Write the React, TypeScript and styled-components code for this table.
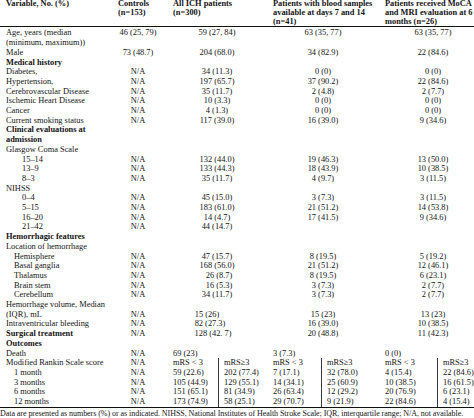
import React from 'react';
import styled, { createGlobalStyle } from 'styled-components';

const Global = createGlobalStyle`
  html, body { margin: 0; padding: 0; background: #ffffff; overflow: hidden; }
`;

const Page = styled.div`
  width: 474px;
  height: 418px;
  overflow: hidden;
  background: #ffffff;
  font-family: "Liberation Serif", "Times New Roman", serif;
  font-size: 8.4px;
  color: #141414;
`;

const Sheet = styled.div`
  width: 493px;
  margin-top: -1.5px;
`;

const Grid = styled.div`
  display: grid;
  grid-template-columns: 118px 55px 45px 55px 48px 64px 52px 56px;
  line-height: 9.7px;
`;

const Head = styled.div<{ $span?: number; $first?: boolean }>`
  grid-column: span ${(p) => p.$span ?? 1};
  font-weight: bold;
  line-height: 9.3px;
  white-space: nowrap;
  padding-left: ${(p) => (p.$first ? 6 : 0)}px;
`;

const Rule = styled.div<{ $thick?: boolean; $gap?: number }>`
  grid-column: 1 / -1;
  height: ${(p) => (p.$thick ? 1.5 : 1)}px;
  background: #111111;
  margin-bottom: ${(p) => p.$gap ?? 0}px;
`;

const Label = styled.div<{ $indent?: number; $bold?: boolean; $full?: boolean }>`
  grid-column: ${(p) => (p.$full ? '1 / -1' : 'span 1')};
  padding-left: ${(p) => p.$indent ?? 6}px;
  font-weight: ${(p) => (p.$bold ? 'bold' : 'normal')};
  white-space: nowrap;
`;

const Value = styled.div<{ $span?: number; $pr?: number; $align?: 'start' | 'end' }>`
  grid-column: span ${(p) => p.$span ?? 2};
  text-align: center;
  padding-right: ${(p) => p.$pr ?? 12}px;
  align-self: ${(p) => p.$align ?? 'start'};
  white-space: nowrap;
`;

const Sub = styled.div<{ $span?: number; $divider?: boolean }>`
  grid-column: span ${(p) => p.$span ?? 1};
  white-space: nowrap;
  padding-left: ${(p) => (p.$divider ? 5 : 0)}px;
  border-left: ${(p) => (p.$divider ? '1px solid #3a3a3a' : 'none')};
`;

const Footer = styled.div`
  width: 474px;
  font-size: 8px;
  line-height: 9px;
  white-space: nowrap;
  letter-spacing: -0.05px;
  padding-top: 0.5px;
`;

type DataRow = {
  label: React.ReactNode;
  indent?: number;
  values: [string, string, string, string];
  align?: 'start' | 'end';
  ichPr?: number;
};

type Row = DataRow | { section: React.ReactNode } | { plain: string; indent?: number };

const rows: Row[] = [
  {
    label: (
      <>
        Age, years (median
        <br />
        (minimum, maximum))
      </>
    ),
    values: ['46 (25, 79)', '59 (27, 84)', '63 (35, 77)', '63 (35, 77)'],
  },
  { label: 'Male', values: ['73 (48.7)', '204 (68.0)', '34 (82.9)', '22 (84.6)'] },
  { section: 'Medical history' },
  { label: 'Diabetes,', values: ['N/A', '34 (11.3)', '0 (0)', '0 (0)'] },
  { label: 'Hypertension,', values: ['N/A', '197 (65.7)', '37 (90.2)', '22 (84.6)'] },
  { label: 'Cerebrovascular Disease', values: ['N/A', '35 (11.7)', '2 (4.8)', '2 (7.7)'] },
  { label: 'Ischemic Heart Disease', values: ['N/A', '10 (3.3)', '0 (0)', '0 (0)'] },
  { label: 'Cancer', values: ['N/A', '4 (1.3)', '0 (0)', '0 (0)'] },
  { label: 'Current smoking status', values: ['N/A', '117 (39.0)', '16 (39.0)', '9 (34.6)'] },
  {
    section: (
      <>
        Clinical evaluations at
        <br />
        admission
      </>
    ),
  },
  { plain: 'Glasgow Coma Scale' },
  { label: '15–14', indent: 22, values: ['N/A', '132 (44.0)', '19 (46.3)', '13 (50.0)'] },
  { label: '13–9', indent: 22, values: ['N/A', '133 (44.3)', '18 (43.9)', '10 (38.5)'] },
  { label: '8–3', indent: 22, values: ['N/A', '35 (11.7)', '4 (9.7)', '3 (11.5)'] },
  { plain: 'NIHSS' },
  { label: '0–4', indent: 22, values: ['N/A', '45 (15.0)', '3 (7.3)', '3 (11.5)'] },
  { label: '5–15', indent: 22, values: ['N/A', '183 (61.0)', '21 (51.2)', '14 (53.8)'] },
  { label: '16–20', indent: 22, values: ['N/A', '14 (4.7)', '17 (41.5)', '9 (34.6)'] },
  { label: '21–42', indent: 22, values: ['N/A', '44 (14.7)', '', ''] },
  { section: 'Hemorrhagic features' },
  { plain: 'Location of hemorrhage' },
  { label: 'Hemisphere', indent: 14, values: ['N/A', '47 (15.7)', '8 (19.5)', '5 (19.2)'] },
  { label: 'Basal ganglia', indent: 14, values: ['N/A', '168 (56.0)', '21 (51.2)', '12 (46.1)'] },
  { label: 'Thalamus', indent: 14, values: ['N/A', '26 (8.7)', '8 (19.5)', '6 (23.1)'], ichPr: 8 },
  { label: 'Brain stem', indent: 14, values: ['N/A', '16 (5.3)', '3 (7.3)', '2 (7.7)'], ichPr: 8 },
  { label: 'Cerebellum', indent: 14, values: ['N/A', '34 (11.7)', '3 (7.3)', '2 (7.7)'] },
  {
    label: (
      <>
        Hemorrhage volume, Median
        <br />
        (IQR), mL
      </>
    ),
    values: ['N/A', '15 (26)', '15 (23)', '13 (23)'],
    align: 'end',
    ichPr: 32,
  },
  { label: 'Intraventricular bleeding', values: ['N/A', '82 (27.3)', '16 (39.0)', '10 (38.5)'], ichPr: 26 },
];

const months: [string, string, string, string, string, string, string][] = [
  ['1 month', '59 (22.6)', '202 (77.4)', '7 (17.1)', '32 (78.0)', '4 (15.4)', '22 (84.6)'],
  ['3 months', '105 (44.9)', '129 (55.1)', '14 (34.1)', '25 (60.9)', '10 (38.5)', '16 (61.5)'],
  ['6 months', '151 (65.1)', '81 (34.9)', '26 (63.4)', '12 (29.2)', '20 (76.9)', '6 (23.1)'],
  ['12 months', '173 (74.9)', '58 (25.1)', '29 (70.7)', '9 (21.9)', '22 (84.6)', '4 (15.4)'],
];

function DataCells({ row, bold }: { row: DataRow; bold?: boolean }) {
  const [c, i, b, m] = row.values;
  return (
    <>
      <Label $indent={row.indent} $bold={bold}>
        {row.label}
      </Label>
      <Value $span={1} $pr={15} $align={row.align}>
        {c}
      </Value>
      <Value $pr={row.ichPr ?? 12} $align={row.align}>
        {i}
      </Value>
      <Value $align={row.align}>{b}</Value>
      <Value $align={row.align}>{m}</Value>
    </>
  );
}

export default function App() {
  return (
    <Page>
      <Global />
      <Sheet>
        <Grid>
          <Head $first>Variable, No. (%)</Head>
          <Head>
            Controls
            <br />
            (n=153)
          </Head>
          <Head $span={2}>
            All ICH patients
            <br />
            (n=300)
          </Head>
          <Head $span={2}>
            Patients with blood samples
            <br />
            available at days 7 and 14
            <br />
            (n=41)
          </Head>
          <Head $span={2}>
            Patients received MoCA
            <br />
            and MRI evaluation at 6
            <br />
            months (n=26)
          </Head>
          <Rule $gap={1} />

          {rows.map((r, idx) => {
            if ('section' in r) {
              return (
                <Label key={idx} $bold $full>
                  {r.section}
                </Label>
              );
            }
            if ('plain' in r) {
              return (
                <Label key={idx} $full $indent={r.indent}>
                  {r.plain}
                </Label>
              );
            }
            return <DataCells key={idx} row={r} />;
          })}

          <DataCells
            bold
            row={{ label: 'Surgical treatment', values: ['N/A', '128 (42. 7)', '20 (48.8)', '11 (42.3)'], ichPr: 20 }}
          />
          <Label $bold $full>
            Outcomes
          </Label>

          <Label>Death</Label>
          <Value $span={1} $pr={15}>
            N/A
          </Value>
          <Sub $span={2}>69 (23)</Sub>
          <Sub $span={2}>3 (7.3)</Sub>
          <Sub $span={2}>0 (0)</Sub>

          <Label>Modified Rankin Scale score</Label>
          <Value $span={1} $pr={15}>
            N/A
          </Value>
          <Sub>mRS &lt; 3</Sub>
          <Sub $divider>mRS≥3</Sub>
          <Sub>mRS &lt; 3</Sub>
          <Sub $divider>mRS≥3</Sub>
          <Sub>mRS &lt; 3</Sub>
          <Sub $divider>mRS≥3</Sub>

          {months.map(([label, a, b, c, d, e, f]) => (
            <React.Fragment key={label}>
              <Label $indent={14}>{label}</Label>
              <Value $span={1} $pr={15}>
                N/A
              </Value>
              <Sub>{a}</Sub>
              <Sub $divider>{b}</Sub>
              <Sub>{c}</Sub>
              <Sub $divider>{d}</Sub>
              <Sub>{e}</Sub>
              <Sub $divider>{f}</Sub>
            </React.Fragment>
          ))}
          <Rule $thick />
        </Grid>
        <Footer>
          Data are presented as numbers (%) or as indicated. NIHSS, National Institutes of Health Stroke Scale; IQR,
          interquartile range; N/A, not available.
        </Footer>
      </Sheet>
    </Page>
  );
}
